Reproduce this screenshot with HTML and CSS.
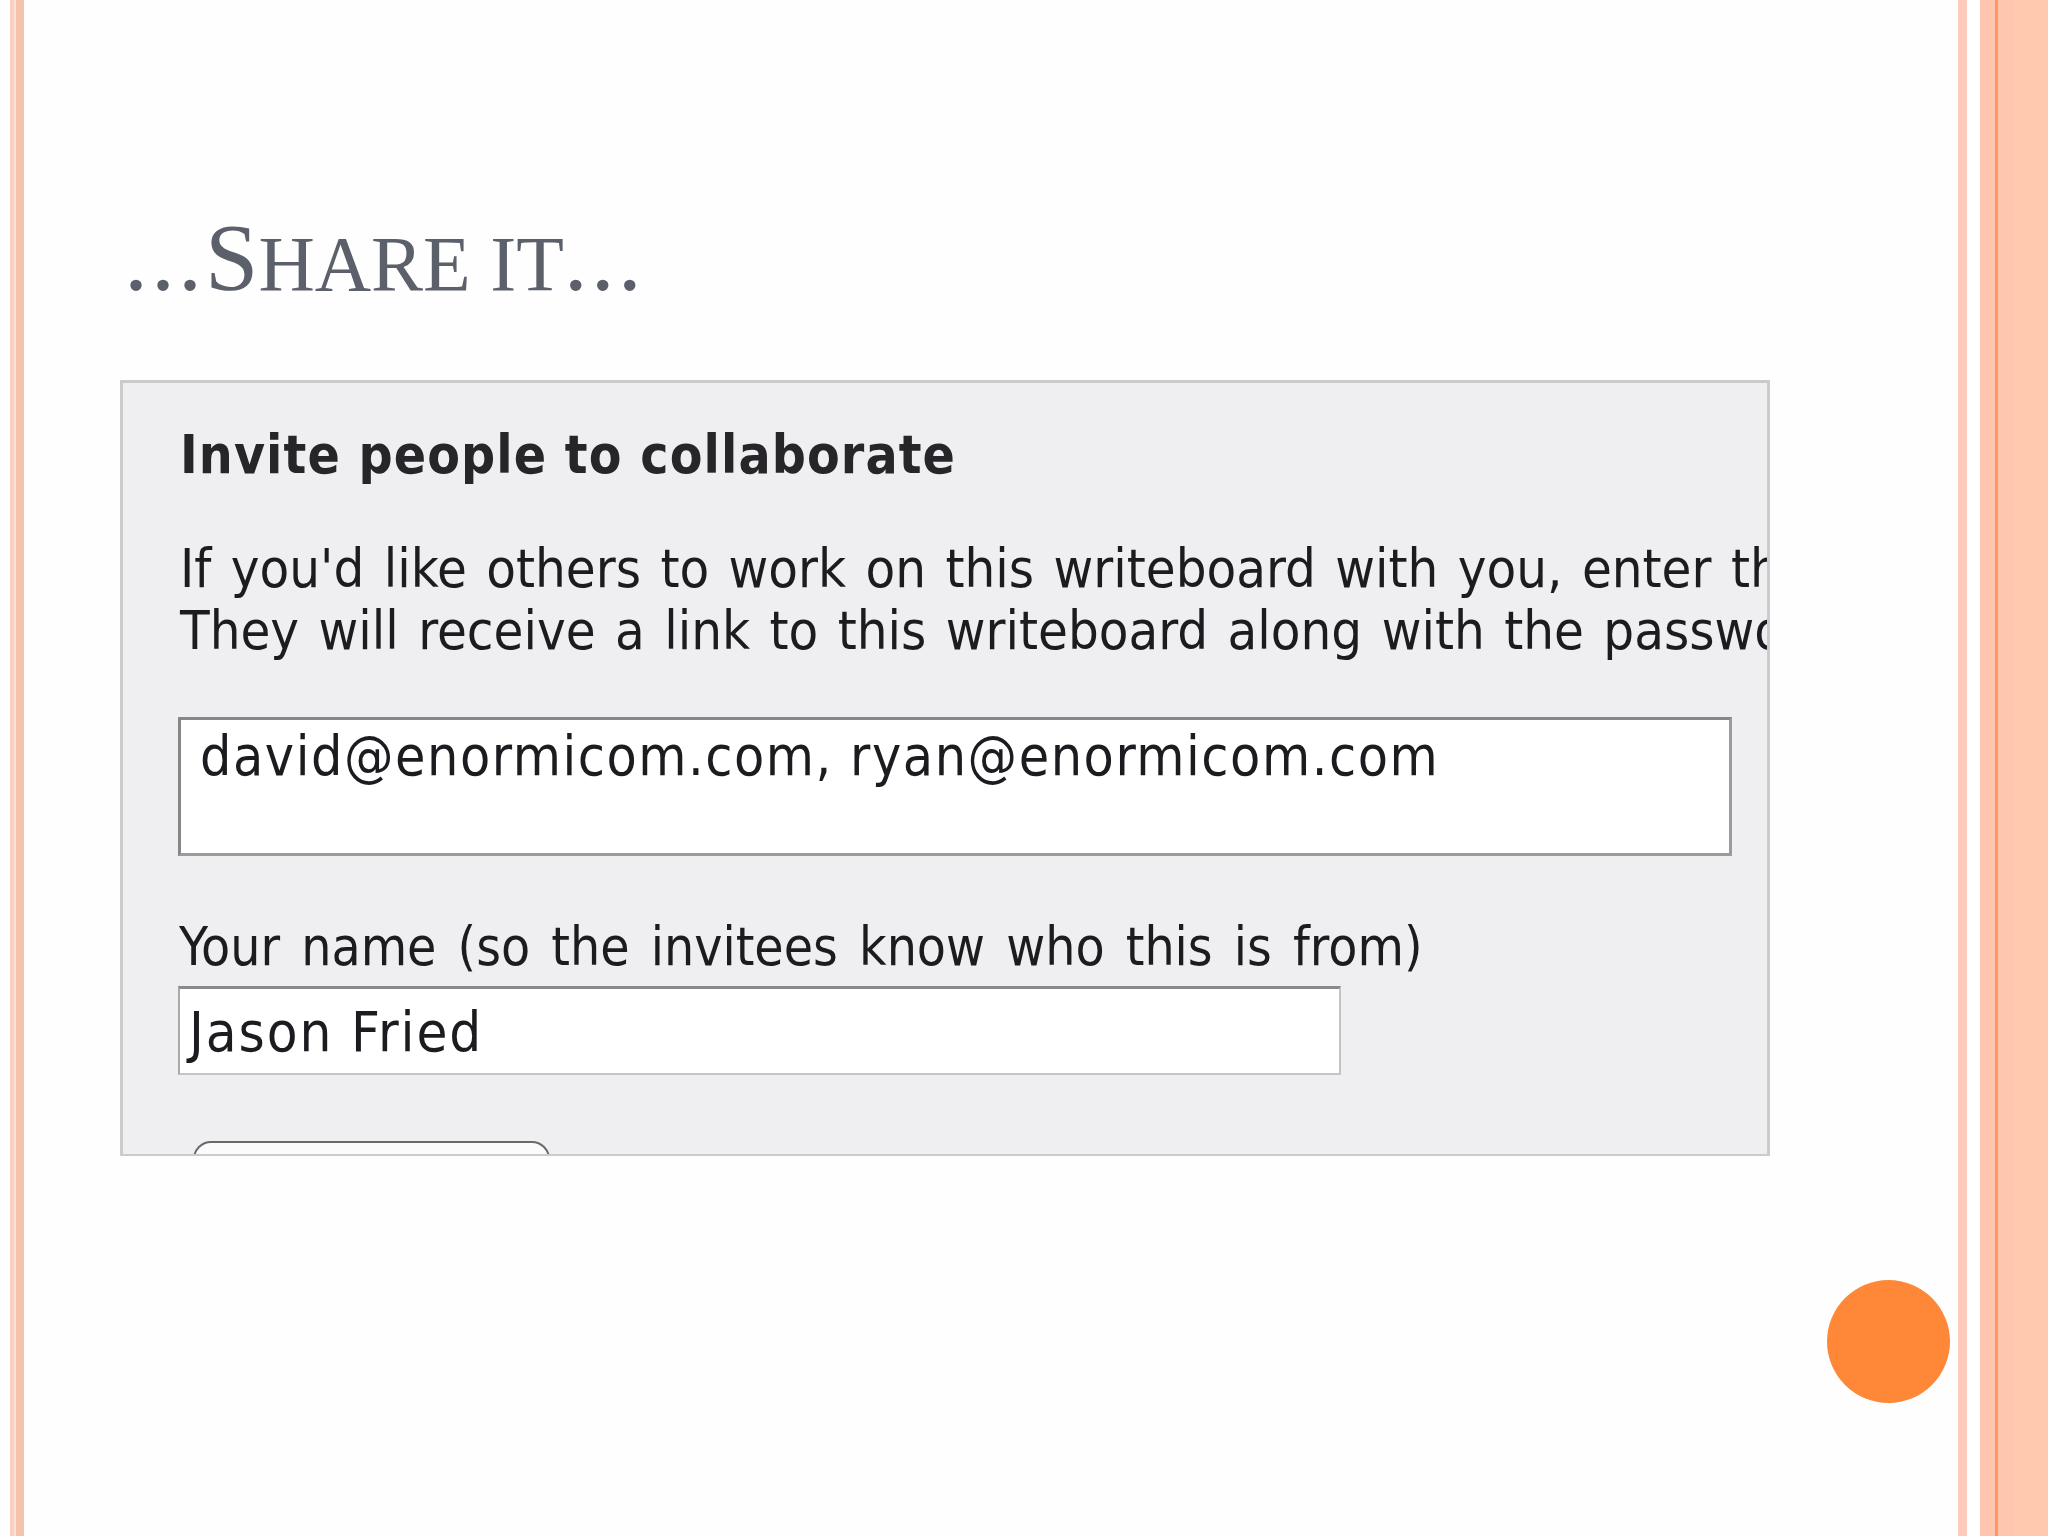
FILE: index.html
```html
<!DOCTYPE html>
<html lang="en">
<head>
<meta charset="utf-8">
<title>...Share it...</title>
<link rel="stylesheet" href="styles.css">
</head>
<body>
<div class="slide">
  <div class="rule-left"></div>
  <div class="content">
    <h1 class="title"><span class="dots">...</span>S<span class="sc">HARE IT</span><span class="dots">...</span></h1>
    <section class="panel">
      <h2 class="panel-title">Invite people to collaborate</h2>
      <p class="panel-text">If you'd like others to work on this writeboard with you, enter their email addresses below.<br>They will receive a link to this writeboard along with the password.</p>
      <div class="field field-emails">david@enormicom.com, ryan@enormicom.com</div>
      <div class="field-label">Your name (so the invitees know who this is from)</div>
      <div class="field field-name">Jason Fried</div>
      <div class="button"></div>
    </section>
    <div class="footer"><span class="dot"></span></div>
  </div>
  <div class="rule-right"></div>
</div>
</body>
</html>
```

FILE: styles.css
```css
html, body {
  margin: 0;
  padding: 0;
}
body {
  background: #ffffff;
  width: 2048px;
  height: 1536px;
  overflow: hidden;
}
.slide {
  display: flex;
  height: 1536px;
  padding-left: 10px;
}
.rule-left {
  flex: none;
  width: 14px;
  background: linear-gradient(to right, #f9cfc0 0 4px, #fbe2d8 4px 6px, #f7c2ab 6px 14px);
}
.content {
  flex: 1;
  display: flex;
  flex-direction: column;
  padding: 208px 8px 0 96px;
  background: #fefefe;
}
.title {
  margin: 0 0 0 4px;
  height: 100px;
  font-family: "Liberation Serif", serif;
  font-weight: normal;
  font-size: 96px;
  line-height: 100px;
  color: #5c606b;
  white-space: nowrap;
}
.sc {
  font-size: 78px;
  line-height: 0;
}
.dots {
  letter-spacing: 3px;
}
.panel {
  margin-top: 72px;
  width: 1650px;
  height: 776px;
  box-sizing: border-box;
  border: 3px solid #cbcbcb;
  border-bottom-width: 2px;
  background: #efeef0;
  overflow: hidden;
  padding: 42px 0 0 57px;
  font-family: "DejaVu Sans", sans-serif;
  font-stretch: semi-condensed;
  color: #1c1c20;
}
.panel-title {
  margin: 0;
  font-weight: bold;
  font-size: 53px;
  letter-spacing: 1.1px;
  line-height: 60px;
  color: #26262a;
  white-space: nowrap;
}
.panel-text {
  margin: 53px 0 0;
  font-size: 54px;
  word-spacing: 4px;
  line-height: 62px;
  white-space: nowrap;
}
.field {
  box-sizing: border-box;
  background: #ffffff;
  line-height: 62px;
  white-space: nowrap;
}
.field-emails {
  margin: 55px 0 0 -2px;
  width: 1554px;
  height: 139px;
  border: 3px solid;
  border-color: #878787 #9b9b9b #9b9b9b #878787;
  padding: 5px 0 0 19px;
  font-size: 55px;
  letter-spacing: 1.55px;
}
.field-label {
  margin: 60px 0 0 -1px;
  font-size: 53px;
  word-spacing: 6px;
  line-height: 62px;
  white-space: nowrap;
}
.field-name {
  margin: 8px 0 0 -2px;
  width: 1163px;
  height: 89px;
  border-style: solid;
  border-width: 3px 2px 2px 2px;
  border-color: #8a8a8a #c4c4c4 #c4c4c4 #a9a9a9;
  padding: 12px 0 0 9px;
  font-size: 56px;
  letter-spacing: 1.9px;
}
.button {
  flex: none;
  margin: 66px 0 0 13px;
  width: 357px;
  height: 60px;
  box-sizing: border-box;
  border: 2px solid #6a6a6a;
  border-radius: 18px;
  background: #fbfbfb;
}
.footer {
  margin-top: 124px;
  display: flex;
  justify-content: flex-end;
}
.dot {
  width: 123px;
  height: 123px;
  border-radius: 50%;
  background: #ff8738;
}
.rule-right {
  flex: none;
  width: 90px;
  background: linear-gradient(to right,
    #fdcabb 0 9px,
    #ffffff 9px 22px,
    #ffc5ae 22px 37px,
    #ff9660 37px 40px,
    #ffc5ae 40px 55px,
    #ffc9af 55px 90px);
}
```
